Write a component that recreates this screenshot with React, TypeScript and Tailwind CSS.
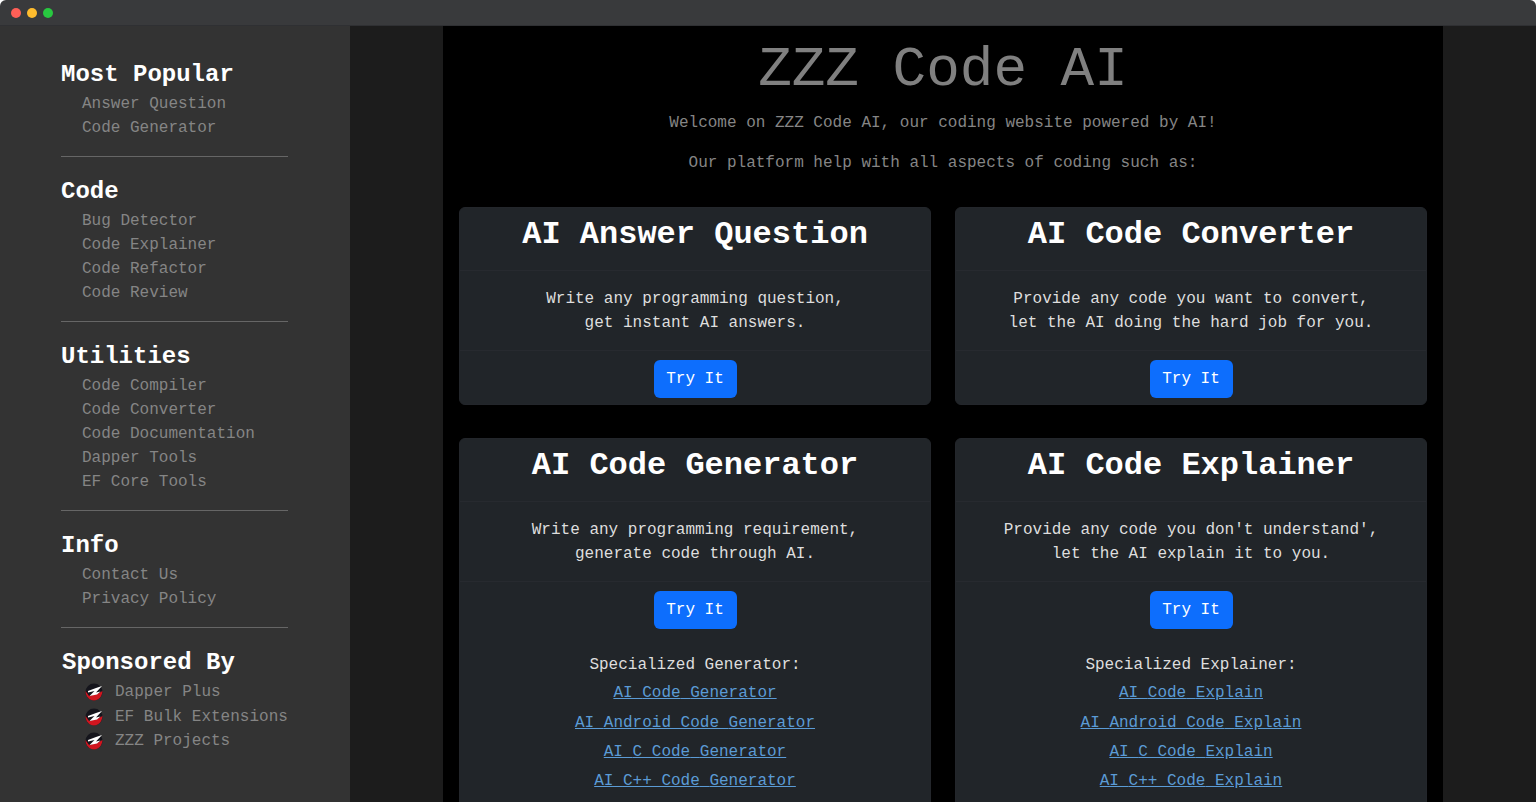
const sections = [
  { title: 'Most Popular', links: ['Answer Question', 'Code Generator'] },
  { title: 'Code', links: ['Bug Detector', 'Code Explainer', 'Code Refactor', 'Code Review'] },
  { title: 'Utilities', links: ['Code Compiler', 'Code Converter', 'Code Documentation', 'Dapper Tools', 'EF Core Tools'] },
  { title: 'Info', links: ['Contact Us', 'Privacy Policy'] },
]

const sponsors = ['Dapper Plus', 'EF Bulk Extensions', 'ZZZ Projects']

const specialized = ['Code', 'Android Code', 'C Code', 'C++ Code']

function ZLogo() {
  return (
    <svg width="20" height="18" viewBox="0 0 20 18" className="shrink-0">
      <circle cx="10" cy="9" r="8.5" fill="#15151c" />
      <path d="M1.5 8 C1.5 13.5 5.5 17.5 10 17.5 C14.5 17.5 18 14 18.5 8 L13 11 L5 13 Z" fill="#d0151f" />
      <path d="M4 8 L12 5 L18 3 L12 9.5 L16.5 8.5 L13 11.5 L5.5 13 L10.5 8 L4 9.5 Z" fill="#ffffff" />
    </svg>
  )
}

function Sidebar() {
  return (
    <aside className="w-[350px] shrink-0 bg-[#333333] pt-[34px] pl-[61px] font-['Liberation_Mono',monospace]">
      <div className="w-[227px]">
        {sections.map((section) => (
          <div key={section.title} className="mb-[20px] border-b border-[#666666] pb-[16px]">
            <h3 className="text-2xl leading-[29px] font-bold text-white">{section.title}</h3>
            <ul className="mt-[3px]">
              {section.links.map((link) => (
                <li key={link} className="pl-[21px] text-base leading-6 text-[#858585]">
                  {link}
                </li>
              ))}
            </ul>
          </div>
        ))}
        <h3 className="pl-[1px] text-2xl leading-[29px] font-bold whitespace-nowrap text-white">Sponsored By</h3>
        <ul className="mt-[3px]">
          {sponsors.map((name) => (
            <li key={name} className="flex h-[24.5px] items-center gap-[11px] pl-[23px] text-base whitespace-nowrap text-[#858585]">
              <ZLogo />
              {name}
            </li>
          ))}
        </ul>
      </div>
    </aside>
  )
}

function Card({ title, lines, kind }: { title: string; lines: string[]; kind?: string }) {
  return (
    <div className="rounded-md border border-[#23262b] bg-[#212529] text-center">
      <div className="h-[63px] border-b border-[#272a2f]">
        <h2 className="text-[32px] leading-[54px] font-bold text-white">{title}</h2>
      </div>
      <div className="h-[80px] border-b border-[#272a2f] pt-[16px] text-base leading-6 text-[#dedede]">
        {lines.map((line) => (
          <div key={line}>{line}</div>
        ))}
      </div>
      <div className="pt-[9px] pb-[6px]">
        <button className="h-[38px] w-[83px] rounded-md bg-[#0d6efd] text-base text-white">Try It</button>
        {kind && (
          <div className="mt-[24px] pb-6">
            <p className="mb-[-1px] text-base leading-6 text-[#dedede]">Specialized {kind === 'Generator' ? 'Generator' : 'Explainer'}:</p>
            {specialized.map((s) => (
              <a key={s} href="#" className="mt-[5.3px] block text-base leading-6 text-[#5b9bd5] underline">
                AI {s} {kind}
              </a>
            ))}
          </div>
        )}
      </div>
    </div>
  )
}

export default function App() {
  return (
    <div className="flex h-[802px] w-[1536px] flex-col overflow-hidden bg-white">
      <div className="flex h-[26px] shrink-0 items-center gap-[6px] rounded-t-[6px] border-b border-[#2f3033] bg-[#393a3c] pt-px pl-[11px]">
        <span className="h-[10px] w-[10px] rounded-full bg-[#ff5f57]" />
        <span className="h-[10px] w-[10px] rounded-full bg-[#febc2e]" />
        <span className="h-[10px] w-[10px] rounded-full bg-[#28c840]" />
      </div>
      <div className="flex min-h-0 flex-1 bg-[#1c1c1c]">
        <Sidebar />
        <main className="ml-[93px] w-[1000px] shrink-0 bg-black px-4 font-['Liberation_Mono',monospace]">
          <h1 className="pt-[11px] text-center text-[56px] leading-[67px] text-[#808080]">ZZZ Code AI</h1>
          <p className="mt-[7px] text-center text-base leading-6 text-[#858585]">Welcome on ZZZ Code AI, our coding website powered by AI!</p>
          <p className="mt-4 text-center text-base leading-6 text-[#858585]">Our platform help with all aspects of coding such as:</p>
          <div className="mt-[32px] grid grid-cols-2 items-start gap-x-6 gap-y-[33px]">
            <Card title="AI Answer Question" lines={['Write any programming question,', 'get instant AI answers.']} />
            <Card title="AI Code Converter" lines={['Provide any code you want to convert,', 'let the AI doing the hard job for you.']} />
            <Card title="AI Code Generator" lines={['Write any programming requirement,', 'generate code through AI.']} kind="Generator" />
            <Card title="AI Code Explainer" lines={["Provide any code you don't understand',", 'let the AI explain it to you.']} kind="Explain" />
          </div>
        </main>
      </div>
    </div>
  )
}
